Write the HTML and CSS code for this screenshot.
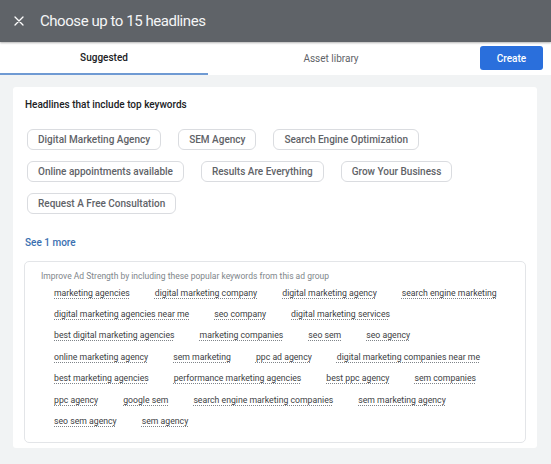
FILE: index.html
```html
<!DOCTYPE html>
<html>
<head>
<meta charset="utf-8">
<link rel="stylesheet" href="styles.css">
</head>
<body>
<div class="header">
  <svg class="close" width="10" height="10" viewBox="0 0 10 10"><path d="M1 1L9 9M9 1L1 9" stroke="#fff" stroke-width="1.3" stroke-linecap="round"/></svg>
  <span class="title">Choose up to 15 headlines</span>
</div>
<div class="tabs">
  <div class="tab active">Suggested</div>
  <div class="tab second">Asset library</div>
  <button class="create">Create</button>
</div>
<div class="main">
  <div class="card">
    <div class="heading">Headlines that include top keywords</div>
    <div class="chips">
      <div class="chiprow"><span class="chip">Digital Marketing Agency</span><span class="chip">SEM Agency</span><span class="chip">Search Engine Optimization</span></div>
      <div class="chiprow"><span class="chip">Online appointments available</span><span class="chip">Results Are Everything</span><span class="chip">Grow Your Business</span></div>
      <div class="chiprow"><span class="chip">Request A Free Consultation</span></div>
    </div>
    <div class="more">See 1 more</div>
    <div class="kwbox">
      <div class="kwintro">Improve Ad Strength by including these popular keywords from this ad group</div>
      <div class="kwrow"><span class="kw">marketing agencies</span><span class="kw">digital marketing company</span><span class="kw">digital marketing agency</span><span class="kw">search engine marketing</span></div>
      <div class="kwrow"><span class="kw">digital marketing agencies near me</span><span class="kw">seo company</span><span class="kw">digital marketing services</span></div>
      <div class="kwrow"><span class="kw">best digital marketing agencies</span><span class="kw">marketing companies</span><span class="kw">seo sem</span><span class="kw">seo agency</span></div>
      <div class="kwrow"><span class="kw">online marketing agency</span><span class="kw">sem marketing</span><span class="kw">ppc ad agency</span><span class="kw">digital marketing companies near me</span></div>
      <div class="kwrow"><span class="kw">best marketing agencies</span><span class="kw">performance marketing agencies</span><span class="kw">best ppc agency</span><span class="kw">sem companies</span></div>
      <div class="kwrow"><span class="kw">ppc agency</span><span class="kw">google sem</span><span class="kw">search engine marketing companies</span><span class="kw">sem marketing agency</span></div>
      <div class="kwrow"><span class="kw">seo sem agency</span><span class="kw">sem agency</span></div>
    </div>
  </div>
</div>
</body>
</html>
```

FILE: styles.css
```css
* { box-sizing: border-box; }
body {
  margin: 0;
  background: #f1f3f4;
  font-family: Roboto, "Open Sans", Arial, sans-serif;
  height: 464px;
  overflow: hidden;
}
.header {
  height: 42px;
  background: #5f6368;
  display: flex;
  align-items: center;
  padding-left: 14px;
  box-shadow: 0 1px 2px rgba(0,0,0,0.3);
  position: relative;
}
.close { margin-right: 16px; }
.title {
  color: #f4f5f6;
  font-size: 15px;
  letter-spacing: -0.45px;
}
.tabs {
  height: 33px;
  background: #fff;
  display: flex;
  align-items: stretch;
}
.tab {
  display: flex;
  align-items: center;
  justify-content: center;
  font-size: 10px;
  font-weight: 500;
  color: #3c4043;
}
.tab.active {
  width: 208px;
  border-bottom: 2px solid #6f9ad3;
  color: #202124;
}
.tab.second {
  width: 246px;
  font-weight: 400;
  color: #5f6368;
}
.create {
  margin: 4px 0 4px 26px;
  width: 63px;
  height: 24px;
  background: #2a6fdc;
  color: #fff;
  border: 0;
  border-radius: 3px;
  font-family: inherit;
  font-size: 10px;
  font-weight: 500;
}
.main {
  padding: 12px 14px 0 13px;
}
.card {
  background: #fff;
  border-radius: 3px;
  padding: 11px 11px 5px 11px;
}
.heading {
  font-size: 10px;
  font-weight: 500;
  color: #202124;
  padding-left: 1px;
  height: 12px;
  margin-top: 1px;
}
.chips {
  margin-top: 18px;
  padding-left: 3px;
  display: flex;
  flex-direction: column;
  gap: 11px;
}
.chiprow {
  display: flex;
  gap: 17px;
}
.chip {
  height: 21px;
  border: 1px solid #dadce0;
  border-radius: 6px;
  padding: 0 10px;
  display: flex;
  align-items: center;
  font-size: 10px;
  font-weight: 500;
  color: #5f6368;
}
.more {
  margin-top: 23px;
  font-size: 10px;
  font-weight: 500;
  color: #3a6fb0;
  padding-left: 1px;
  height: 12px;
}
.kwbox {
  margin-top: 12px;
  border: 1px solid #e3e5e8;
  border-radius: 5px;
  padding: 9px 0 10px 16px;
}
.kwintro {
  font-size: 8.5px;
  color: #80868b;
  height: 11px;
}
.kwrow {
  display: flex;
  gap: 25px;
  padding-left: 13px;
  height: 21.4px;
  align-items: center;
}
.kw {
  font-size: 8.7px;
  color: #3c4043;
  text-decoration: underline dotted #7f8489;
  text-underline-offset: 2px;
}
```
